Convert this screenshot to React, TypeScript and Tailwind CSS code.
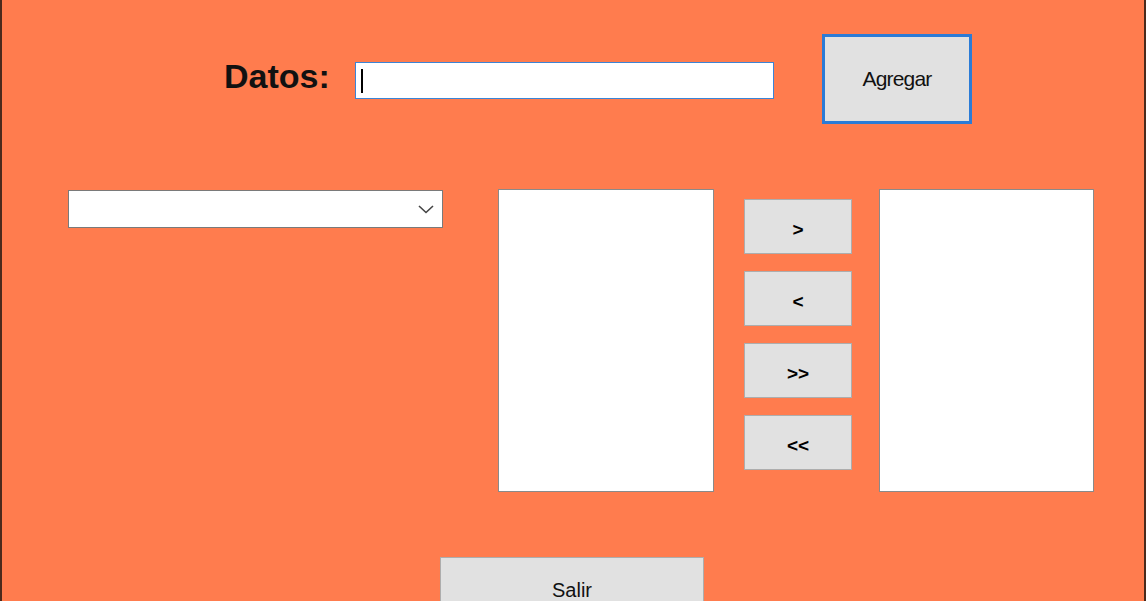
import React from 'react';

const moveButtons = ['>', '<', '>>', '<<'];

const MoveButton: React.FC<{ label: string }> = ({ label }) => (
    <button className="w-[108px] h-[55px] bg-[#e1e1e1] border border-[#adadad] text-[19px] font-bold text-black flex items-center justify-center leading-none pt-[5px]">
        {label}
    </button>
);

export default function App() {
    return (
        <div
            className="w-[1146px] h-[601px] overflow-hidden bg-[#ff7c4e] border-l-2 border-r-2 border-[#4b2a1c] flex flex-col"
            style={{ fontFamily: '"Liberation Sans", Arial, sans-serif' }}
        >
            {/* header row */}
            <div className="flex items-start pt-[34px] pl-[222px]">
                <div className="w-[131px] mt-[25px] text-[34px] leading-none font-bold text-[#111]">Datos:</div>
                <div className="w-[419px] h-[37px] mt-[28px] bg-white border-[1.5px] border-[#3b84d6] flex items-center pl-[5px]">
                    <div className="w-[2px] h-[24px] bg-black" />
                </div>
                <button className="ml-[48px] w-[150px] h-[90px] bg-[#e1e1e1] border-[3px] border-[#2b7bd6] text-[21px] tracking-[-0.8px] text-[#111] flex items-center justify-center">
                    Agregar
                </button>
            </div>

            {/* lists row */}
            <div className="flex items-start mt-[65px] pl-[66px]">
                <div className="w-[375px] h-[38px] mt-[1px] bg-white border border-[#7a7a7a] flex items-center justify-end pr-[6px]">
                    <svg width="20" height="12" viewBox="0 0 20 12" fill="none">
                        <path d="M3 3 L10 9.5 L17 3" stroke="#444" strokeWidth="1.6" />
                    </svg>
                </div>
                <div className="ml-[55px] w-[216px] h-[303px] bg-white border border-[#8a8a8a]" />
                <div className="ml-[30px] mt-[10px] flex flex-col gap-[17px]">
                    {moveButtons.map((b) => (
                        <MoveButton key={b} label={b} />
                    ))}
                </div>
                <div className="ml-[27px] w-[215px] h-[303px] bg-white border border-[#8a8a8a]" />
            </div>

            {/* footer */}
            <div className="pl-[438px] mt-[65px]">
                <button className="w-[264px] h-[60px] bg-[#e1e1e1] border border-[#adadad] text-[20px] text-[#111] flex justify-center pt-[22px] leading-none">
                    Salir
                </button>
            </div>
        </div>
    );
}
